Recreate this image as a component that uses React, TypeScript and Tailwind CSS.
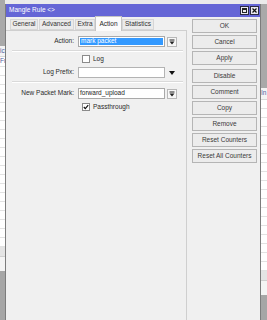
import React from "react";

function DropIcon() {
  return (
    <svg width="6" height="6" viewBox="0 0 6 6">
      <rect x="0.5" y="0.5" width="5" height="1" fill="#222" />
      <path d="M0.5 2.5 L5.5 2.5 L3 5.5 Z" fill="#222" />
    </svg>
  );
}

function DropBox() {
  return (
    <div className="w-[10px] h-[10px] ml-[2px] border border-[#b8b8b8] bg-[#f7f7f7] flex items-center justify-center">
      <DropIcon />
    </div>
  );
}

function Checkbox({ checked }: { checked?: boolean }) {
  return (
    <div className="w-[8px] h-[8px] border border-[#8a8a8a] bg-white flex items-center justify-center">
      {checked && (
        <svg width="6" height="6" viewBox="0 0 6 6">
          <path d="M0.8 3 L2.3 4.6 L5.2 1.2" stroke="#111" strokeWidth="1.2" fill="none" />
        </svg>
      )}
    </div>
  );
}

function Btn({ label, className = "" }: { label: string; className?: string }) {
  return (
    <div
      className={`h-[14px] w-[65px] border border-[#b5b5b5] bg-[#ececec] flex items-center justify-center text-[#3a3a3a] ${className}`}
    >
      {label}
    </div>
  );
}

function Label({ text }: { text: string }) {
  return <div className="w-[72px] pr-[4px] text-right text-[#2a2a2a]">{text}</div>;
}

function Sep({ className = "" }: { className?: string }) {
  return <div className={`ml-[6px] mr-[3px] border-t border-[#d9d9d9] border-b border-b-white ${className}`} />;
}

function Tab({ label, w, active }: { label: string; w: string; active?: boolean }) {
  if (active) {
    return (
      <div
        className={`${w} h-[15px] -mt-[2px] -mb-[1px] border border-b-0 border-[#c4c4c4] bg-[#fbfbfb] flex items-center justify-center text-[#1e1e1e] relative z-10`}
      >
        {label}
      </div>
    );
  }
  return (
    <div
      className={`${w} h-[11px] border border-[#d6d6d6] bg-[#ebebeb] flex items-center justify-center text-[#333]`}
    >
      {label}
    </div>
  );
}

function Rows({ n }: { n: number }) {
  return (
    <>
      {Array.from({ length: n }).map((_, i) => (
        <div key={i} className="h-[9px] bg-white border-b border-[#e2e2e2] shrink-0" />
      ))}
    </>
  );
}

export default function App() {
  return (
    <div className="w-[267px] h-[320px] flex overflow-hidden bg-[#f0f0f0] font-['Liberation_Sans',Arial,sans-serif] text-[6.5px] leading-none">
      {/* left background strip */}
      <div className="w-[5px] flex flex-col overflow-hidden">
        <div className="h-[46px] bg-[#a9a9a9] shrink-0" />
        <div className="h-[11px] bg-[#f4f4f4] border-b border-[#d8d8d8] text-[#5060a0] flex items-center shrink-0">ic</div>
        <div className="h-[10px] bg-white border-b border-[#e2e2e2] text-[#5060a0] flex items-center shrink-0">Fr</div>
        <Rows n={20} />
        <div className="h-[10px] bg-[#e4e4e4] border-b border-[#cfcfcf] shrink-0" />
        <div className="h-[14px] bg-[#f4f4f4] shrink-0" />
        <div className="flex-1 bg-[#a6a6a6]" />
      </div>

      {/* center column with window */}
      <div className="w-[256px] flex flex-col">
        <div className="h-[4px] bg-[#ebebeb] shrink-0" />
        <div className="flex-1 flex flex-col border-x border-[#7c7c7c] bg-[#f0f0f0]">
          {/* title bar */}
          <div className="h-[13px] bg-[#6566d6] flex items-center justify-between pl-[3px] pr-[1px] shrink-0">
            <span className="text-white text-[6.5px]">Mangle Rule &lt;&gt;</span>
            <div className="flex gap-[1px]">
              <div className="w-[9px] h-[9px] bg-[#e9e9ef] border border-[#2a2a40] flex items-center justify-center">
                <div className="w-[5px] h-[5px] border border-[#222] border-t-2" />
              </div>
              <div className="w-[9px] h-[9px] bg-[#e9e9ef] border border-[#2a2a40] flex items-center justify-center">
                <svg width="5" height="5" viewBox="0 0 5 5">
                  <path d="M0.5 0.5 L4.5 4.5 M4.5 0.5 L0.5 4.5" stroke="#111" strokeWidth="1.2" />
                </svg>
              </div>
            </div>
          </div>

          {/* body */}
          <div className="flex-1 flex">
            {/* left pane */}
            <div className="w-[181px] flex flex-col">
              <div className="flex items-end pt-[2px] pl-[4px] h-[13px] shrink-0">
                <div className="flex gap-[1px] items-start">
                  <Tab label="General" w="w-[28px]" />
                  <Tab label="Advanced" w="w-[35px]" />
                  <Tab label="Extra" w="w-[20px]" />
                </div>
                <Tab label="Action" w="w-[27px]" active />
                <Tab label="Statistics" w="w-[32px]" />
              </div>
              <div className="flex-1 border-t border-r border-[#cfcfcf] flex flex-col">
                {/* Action row */}
                <div className="flex items-center mt-[5px] h-[11px]">
                  <Label text="Action:" />
                  <div className="w-[87px] h-[11px] border border-[#a9a9a9] bg-white p-[1px]">
                    <div className="h-full bg-[#3399ff] text-white flex items-center pl-[1px]">mark packet</div>
                  </div>
                  <DropBox />
                </div>
                <Sep className="mt-[3px]" />
                {/* Log */}
                <div className="flex items-center mt-[3px] h-[8px]">
                  <div className="w-[76px]" />
                  <Checkbox />
                  <span className="ml-[3px] text-[#2a2a2a]">Log</span>
                </div>
                {/* Log Prefix */}
                <div className="flex items-center mt-[4px] h-[11px]">
                  <Label text="Log Prefix:" />
                  <div className="w-[87px] h-[11px] border border-[#b3b3b3] bg-white" />
                  <svg width="6" height="4" viewBox="0 0 6 4" className="ml-[4px]">
                    <path d="M0 0 L6 0 L3 4 Z" fill="#111" />
                  </svg>
                </div>
                <Sep className="mt-[3px]" />
                {/* New Packet Mark */}
                <div className="flex items-center mt-[5px] h-[11px]">
                  <Label text="New Packet Mark:" />
                  <div className="w-[87px] h-[11px] border border-[#a9a9a9] bg-white flex items-center pl-[1px] text-[#1e1e1e]">
                    forward_upload
                  </div>
                  <DropBox />
                </div>
                {/* Passthrough */}
                <div className="flex items-center mt-[4px] h-[8px]">
                  <div className="w-[76px]" />
                  <Checkbox checked />
                  <span className="ml-[3px] text-[#2a2a2a]">Passthrough</span>
                </div>
              </div>
            </div>

            {/* right button pane */}
            <div className="flex-1 flex flex-col pl-[5px] pt-[2px] gap-[2px]">
              <Btn label="OK" />
              <Btn label="Cancel" />
              <Btn label="Apply" />
              <Btn label="Disable" className="mt-[2px]" />
              <Btn label="Comment" />
              <Btn label="Copy" />
              <Btn label="Remove" />
              <Btn label="Reset Counters" />
              <Btn label="Reset All Counters" />
            </div>
          </div>
        </div>
      </div>

      {/* right background strip */}
      <div className="w-[6px] flex flex-col overflow-hidden">
        <div className="h-[4px] bg-[#ebebeb] shrink-0" />
        <div className="h-[84px] bg-[#a9a9a9] shrink-0" />
        <div className="h-[12px] bg-[#f4f4f4] border-b border-[#d8d8d8] text-[#5060a0] flex items-center shrink-0">In</div>
        <Rows n={19} />
        <div className="h-[10px] bg-[#e4e4e4] border-b border-[#cfcfcf] shrink-0" />
        <div className="h-[14px] bg-[#f4f4f4] shrink-0" />
        <div className="flex-1 bg-[#a6a6a6]" />
      </div>
    </div>
  );
}
